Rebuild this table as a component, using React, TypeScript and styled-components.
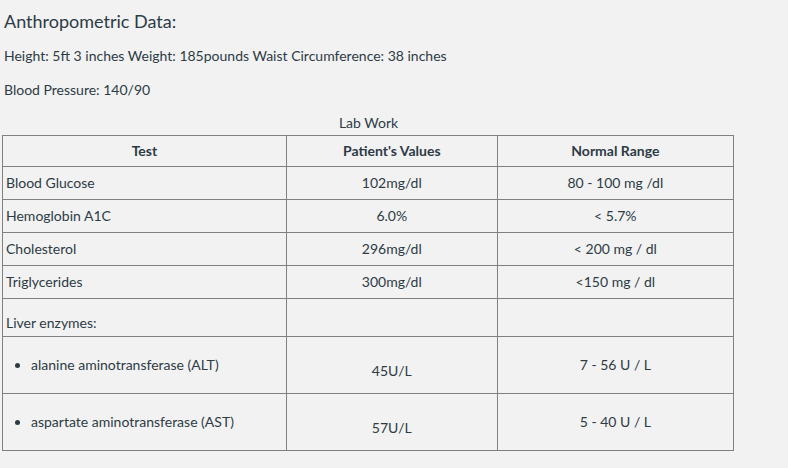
import React from 'react';
import styled, { createGlobalStyle } from 'styled-components';

const GlobalStyle = createGlobalStyle`
  html, body {
    margin: 0;
    padding: 0;
    background: #f2f2f2;
  }
  body {
    font-family: Lato, "Open Sans", sans-serif;
    color: #2d3b45;
  }
`;

const Page = styled.div`
  width: 788px;
  height: 468px;
  padding: 0 3px;
  box-sizing: border-box;
  overflow: hidden;
`;

const Heading = styled.h3`
  font-size: 18px;
  font-weight: 400;
  line-height: 24px;
  margin: 9px 0 0 1px;
`;

const Para = styled.p<{ gap?: number }>`
  font-size: 14px;
  line-height: 20px;
  margin: 0 0 0 1px;
  padding-top: ${(p) => p.gap ?? 13}px;
`;

const LabTable = styled.table`
  width: 732px;
  border-collapse: collapse;
  margin: 12px 0 0 -1px;
  font-size: 14px;
  line-height: 20px;
`;

const Caption = styled.caption`
  text-align: center;
  height: 23px;
  line-height: 22px;
  padding-left: 1px;
`;

const Th = styled.th<{ w: number }>`
  width: ${(p) => p.w}px;
  border: 1px solid #808080;
  height: 29px;
  padding: 0 3px 1px;
  font-weight: 700;
  text-align: center;
`;

// lift: rows whose text sits a pixel above the middle
const Td = styled.td<{ center?: boolean; h?: number; drop?: number; lift?: number }>`
  border: 1px solid #808080;
  height: ${(p) => (p.h ?? 32) - (p.drop ?? 0) - (p.lift ?? 0)}px;
  padding: ${(p) => `${p.drop ?? 0}px 3px ${p.lift ?? 0}px`};
  text-align: ${(p) => (p.center ? 'center' : 'left')};
  vertical-align: middle;
`;

const Bullets = styled.ul`
  margin: 0;
  padding-left: 25px;
`;

const rows = [
  ['Blood Glucose', '102mg/dl', '80 - 100 mg /dl'],
  ['Hemoglobin A1C', '6.0%', '< 5.7%'],
  ['Cholesterol', '296mg/dl', '< 200 mg / dl'],
  ['Triglycerides', '300mg/dl', '<150 mg / dl'],
];

const enzymes = [
  ['alanine aminotransferase (ALT)', '45U/L', '7 - 56 U / L'],
  ['aspartate aminotransferase (AST)', '57U/L', '5 - 40 U / L'],
];

export default function App() {
  return (
    <Page>
      <GlobalStyle />
      <Heading>Anthropometric Data:</Heading>
      <Para>Height: 5ft 3 inches Weight: 185pounds Waist Circumference: 38 inches</Para>
      <Para gap={14}>Blood Pressure: 140/90</Para>
      <LabTable>
        <Caption>Lab Work</Caption>
        <thead>
          <tr>
            <Th w={283}>Test</Th>
            <Th w={210}>Patient's Values</Th>
            <Th w={237}>Normal Range</Th>
          </tr>
        </thead>
        <tbody>
          {rows.map((r) => (
            <tr key={r[0]}>
              <Td lift={1}>{r[0]}</Td>
              <Td center lift={1}>{r[1]}</Td>
              <Td center lift={1}>{r[2]}</Td>
            </tr>
          ))}
          <tr>
            <Td h={37} drop={10}>Liver enzymes:</Td>
            <Td h={37} />
            <Td h={37} />
          </tr>
          {enzymes.map((r) => (
            <tr key={r[0]}>
              <Td h={56} lift={1}>
                <Bullets>
                  <li>{r[0]}</li>
                </Bullets>
              </Td>
              <Td center h={56} drop={12}>{r[1]}</Td>
              <Td center h={56} lift={1}>{r[2]}</Td>
            </tr>
          ))}
        </tbody>
      </LabTable>
    </Page>
  );
}
